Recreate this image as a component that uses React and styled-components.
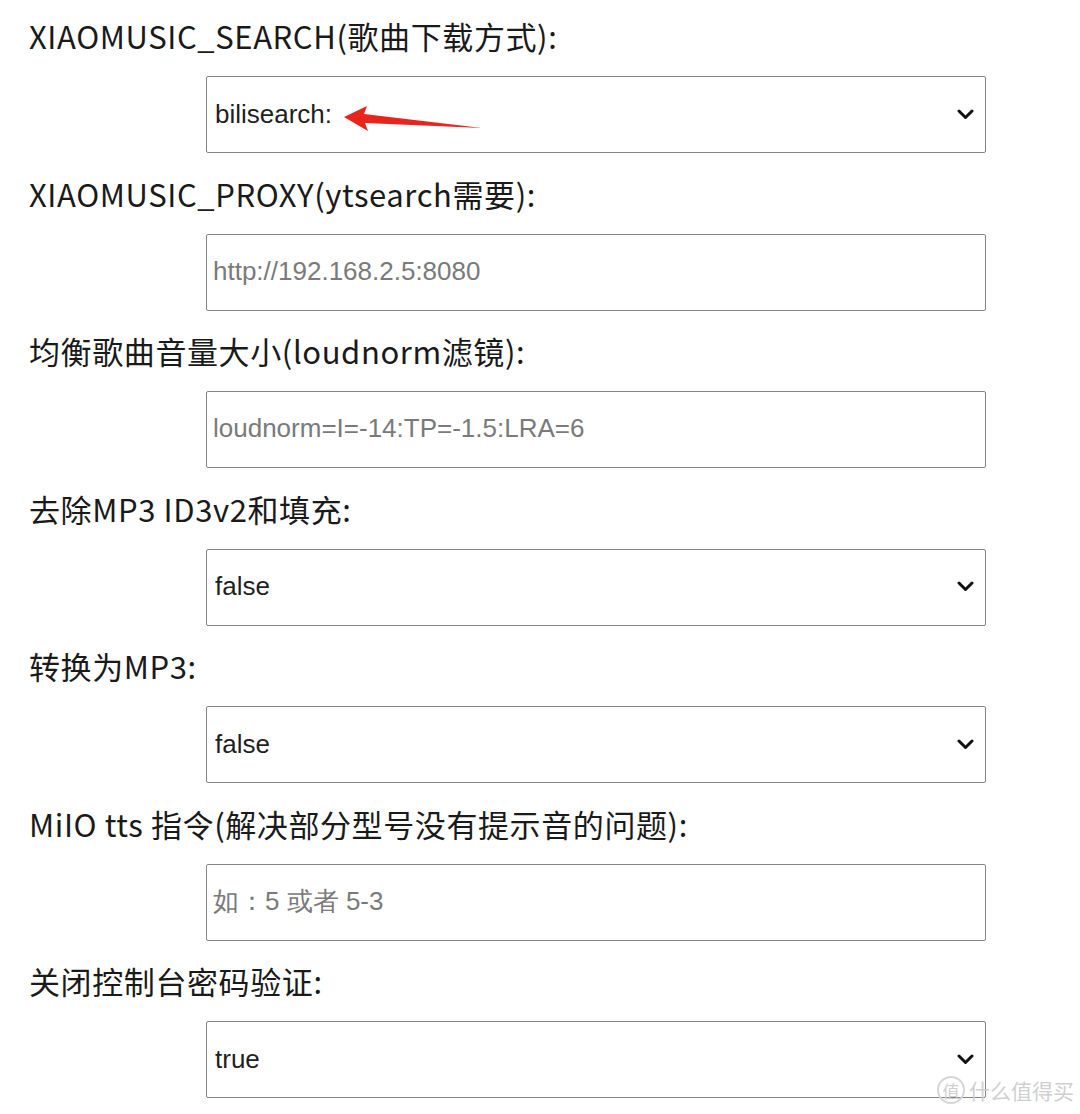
import React from "react";
import styled, { createGlobalStyle } from "styled-components";

const GlobalStyle = createGlobalStyle`
  html, body {
    margin: 0;
    padding: 0;
    background: #ffffff;
  }
  body {
    font-family: "Noto Sans CJK SC", "Noto Sans", sans-serif;
  }
`;

const Page = styled.div`
  position: relative;
  width: 1080px;
  height: 1114px;
  overflow: hidden;
  padding: 14px 0 0 29px;
  box-sizing: border-box;
`;

const Field = styled.div`
  display: flex;
  flex-direction: column;
  margin-bottom: 18.5px;
`;

const Label = styled.label`
  font-family: "Noto Sans CJK SC", sans-serif;
  font-size: 31px;
  line-height: 44px;
  height: 44px;
  color: #1a1a1a;
  white-space: nowrap;
  letter-spacing: 0.6px;
`;

const BoxWrap = styled.div`
  position: relative;
  margin: 18px 0 0 177px;
  width: 780px;
  height: 77px;
`;

const boxBase = `
  box-sizing: border-box;
  width: 100%;
  height: 100%;
  border: 1px solid #858585;
  border-radius: 2px;
  background: #fff;
  font-family: "Liberation Sans", Arial, sans-serif;
  font-size: 26px;
  color: #1f1f1f;
  outline: none;
  margin: 0;
`;

const Select = styled.select`
  ${boxBase}
  appearance: none;
  -webkit-appearance: none;
  padding: 0 40px 2px 8px;
`;

const Input = styled.input`
  ${boxBase}
  padding: 0 6px 2px;
  &::placeholder {
    color: #7a7a7a;
    opacity: 1;
  }
`;

const Chevron = styled.svg`
  position: absolute;
  right: 12px;
  top: 50%;
  margin-top: -6px;
  pointer-events: none;
`;

const Annotation = styled.svg`
  position: absolute;
  left: 336px;
  top: 100px;
  filter: blur(0.6px);
  pointer-events: none;
`;

const Watermark = styled.div`
  position: absolute;
  right: 6px;
  bottom: 9px;
  display: flex;
  align-items: center;
  gap: 4px;
  color: #cfcfcf;
  font-family: "Noto Sans CJK SC", sans-serif;
  font-size: 21px;
  pointer-events: none;
`;

const Badge = styled.span`
  display: inline-flex;
  align-items: center;
  justify-content: center;
  width: 28px;
  height: 28px;
  border: 2px solid #d6d6d6;
  border-radius: 50%;
  font-size: 17px;
  box-sizing: border-box;
`;

const fields = [
  { label: "XIAOMUSIC_SEARCH(歌曲下载方式):", type: "select", value: "bilisearch:" },
  { label: "XIAOMUSIC_PROXY(ytsearch需要):", type: "input", placeholder: "http://192.168.2.5:8080" },
  { label: "均衡歌曲音量大小(loudnorm滤镜):", type: "input", placeholder: "loudnorm=I=-14:TP=-1.5:LRA=6" },
  { label: "去除MP3 ID3v2和填充:", type: "select", value: "false" },
  { label: "转换为MP3:", type: "select", value: "false" },
  { label: "MiIO tts 指令(解决部分型号没有提示音的问题):", type: "input", placeholder: "如：5 或者 5-3" },
  { label: "关闭控制台密码验证:", type: "select", value: "true" },
];

const ChevronIcon = () => (
  <Chevron width="17" height="11" viewBox="0 0 17 11">
    <polyline
      points="2,2 8.5,8.5 15,2"
      fill="none"
      stroke="#111"
      strokeWidth="3"
      strokeLinecap="round"
      strokeLinejoin="round"
    />
  </Chevron>
);

const App = () => {
  return (
    <Page>
      <GlobalStyle />
      {fields.map((f) => (
        <Field key={f.label}>
          <Label>{f.label}</Label>
          <BoxWrap>
            {f.type === "select" ? (
              <>
                <Select defaultValue={f.value}>
                  <option value={f.value}>{f.value}</option>
                </Select>
                <ChevronIcon />
              </>
            ) : (
              <Input placeholder={f.placeholder} />
            )}
          </BoxWrap>
        </Field>
      ))}

      <Annotation width="160" height="40" viewBox="0 0 160 40">
        <polygon
          points="8,17 31,6 28,14 146,28 29,23 32,31"
          fill="#e8241c"
        />
      </Annotation>

      <Watermark>
        <Badge>值</Badge>
        <span>什么值得买</span>
      </Watermark>
    </Page>
  );
};

export default App;
